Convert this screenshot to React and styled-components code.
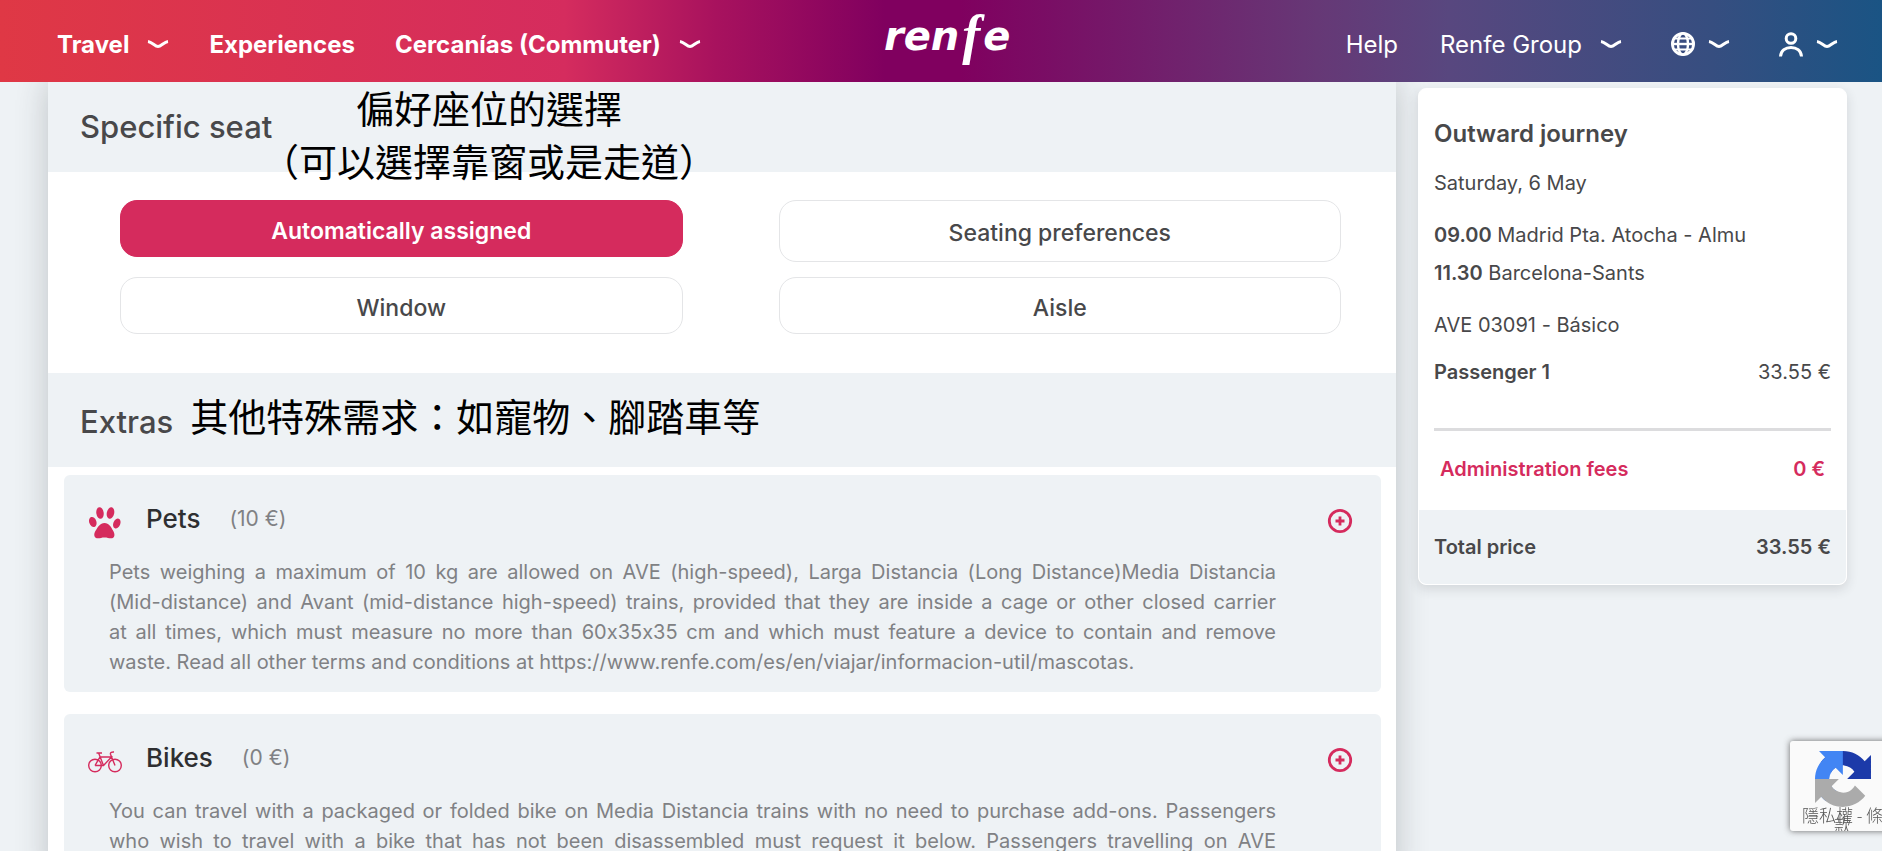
import React, { useState } from "react";
import styled, { createGlobalStyle } from "styled-components";

const Global = createGlobalStyle`
  *, *::before, *::after { box-sizing: border-box; }
  html, body { margin: 0; padding: 0; background: #eef2f5; }
  body {
    font-family: Inter, "Liberation Sans", "Noto Sans CJK TC", sans-serif;
    font-variant-ligatures: no-contextual;
    color: #48484a;
    overflow: hidden;
  }
  h2, h3, p { margin: 0; }
  button { font-family: inherit; color: inherit; cursor: pointer; }
`;

const Page = styled.div`
  height: 100vh;
  overflow: hidden;
`;

const Header = styled.header`
  display: grid;
  grid-template-columns: 1fr auto 1fr;
  align-items: center;
  height: 82px;
  padding: 0 44px 0 57px;
  position: relative;
  z-index: 2;
  background: linear-gradient(
    90deg,
    #df3845 0%,
    #d52c5e 30%,
    #a8125e 38%,
    #80005f 47%,
    #80005f 51%,
    #663876 70%,
    #58477f 77%,
    #364e80 91%,
    #1a5484 100%
  );
`;

const Nav = styled.nav`
  display: flex;
  align-items: center;
  gap: ${(p) => (p.$end ? "42px" : "40px")};
  padding-top: 8px;
  justify-content: ${(p) => (p.$end ? "flex-end" : "flex-start")};
  font-weight: ${(p) => (p.$end ? 400 : 700)};
`;

const NavLink = styled.a`
  color: #fff;
  text-decoration: none;
  font-size: 24px;
  line-height: 30px;
  white-space: nowrap;
`;

const NavButton = styled.button`
  display: flex;
  align-items: center;
  gap: ${(p) => (p.$icon ? "12px" : "18px")};
  margin-left: ${(p) => (p.$icon ? "6px" : 0)};
  padding: 0;
  border: 0;
  background: none;
  color: #fff;
  font-size: 24px;
  font-weight: inherit;
  line-height: 30px;
  white-space: nowrap;
`;

const LogoLink = styled.a`
  display: block;
  height: 58px;
`;

const LogoDrawing = styled.svg`
  display: block;
  overflow: visible;
`;

const Layout = styled.div`
  display: grid;
  grid-template-columns: minmax(0, 1fr) 429px;
  gap: 22px;
  align-items: start;
  padding: 0 35px 0 48px;
`;

const Panel = styled.main`
  background: #fff;
  box-shadow: 0 0 30px rgba(40, 45, 50, 0.24);
`;

const Band = styled.div`
  position: relative;
  display: flex;
  align-items: center;
  gap: 17px;
  height: ${(p) => (p.$tall ? "94px" : "90px")};
  padding: ${(p) => (p.$tall ? "4px" : 0)} 0 0 32px;
  background: #eef2f5;
`;

const BandTitle = styled.h2`
  font-size: 31px;
  line-height: 36px;
  font-weight: 500;
`;

const Note = styled.p`
  font-family: "Noto Sans CJK TC", sans-serif;
  font-size: 38px;
  line-height: 53px;
  color: #000;
  padding-bottom: 16px;
`;

const FloatingNote = styled(Note)`
  position: absolute;
  top: -2px;
  left: 213px;
  padding: 0;
  text-align: center;
  white-space: nowrap;
  z-index: 1;
`;

const SeatGrid = styled.div`
  display: grid;
  grid-template-columns: 1fr 1fr;
  align-items: start;
  gap: 15px 96px;
  padding: 28px 55px 39px 72px;
`;

const SeatButton = styled.button`
  height: ${(p) => p.$height}px;
  padding: 4px 0 0;
  border: 1px solid ${(p) => (p.$on ? "#d52b5d" : "#e4e5e7")};
  border-radius: 17px;
  background: ${(p) => (p.$on ? "#d52b5d" : "#fff")};
  color: ${(p) => (p.$on ? "#fff" : "#48484a")};
  font-size: 23px;
  font-weight: ${(p) => (p.$on ? 600 : 500)};
`;

const ExtraList = styled.div`
  display: flex;
  flex-direction: column;
  gap: 22px;
  padding: 8px 15px 8px 16px;
`;

const ExtraCard = styled.article`
  padding: 24px 28px 15px 24px;
  border-radius: 6px;
  background: #eef2f5;
`;

const ExtraHead = styled.div`
  display: flex;
  align-items: center;
  height: 40px;
  margin-bottom: 18px;
`;

const ExtraIcon = styled.span`
  display: flex;
  width: 34px;
  margin-right: 24px;
  padding-top: 8px;
`;

const ExtraName = styled.h3`
  font-size: 26px;
  line-height: 36px;
  font-weight: 500;
  color: #2e2f31;
`;

const ExtraPrice = styled.span`
  margin-left: 29px;
  font-size: 21px;
  line-height: 30px;
  color: #808184;
`;

const AddButton = styled.button`
  display: flex;
  margin-left: auto;
  padding: 4px 0 0;
  border: 0;
  background: none;
`;

const ExtraText = styled.p`
  margin: 0 77px 0 21px;
  font-size: 20px;
  line-height: 30px;
  color: #808184;
`;

const TextLine = styled.span`
  display: block;
  text-align: justify;
  text-align-last: ${(p) => (p.$fill ? "justify" : "left")};
`;

const Summary = styled.aside`
  margin-top: 6px;
  border: 1px solid #fff;
  border-radius: 8px;
  background: #fff;
  box-shadow: 0 4px 12px rgba(40, 45, 50, 0.14);
  overflow: hidden;
  font-size: 20px;
  line-height: 30px;
`;

const SummaryBody = styled.div`
  padding: 27px 15px 26px;
`;

const SummaryTitle = styled.h2`
  margin-bottom: 16px;
  font-size: 24px;
  line-height: 36px;
  font-weight: 600;
`;

const Line = styled.p`
  margin-bottom: ${(p) => p.$after}px;
`;

const Strong = styled.strong`
  font-weight: 600;
`;

const Row = styled.div`
  display: flex;
  justify-content: space-between;
`;

const Fees = styled(Row)`
  margin-top: 41px;
  padding: 23px 6px 0;
  border-top: 3px solid #dcdcde;
  color: #d52b5d;
  font-weight: 600;
`;

const Total = styled(Row)`
  align-items: center;
  height: 74px;
  padding: 0 15px;
  border-radius: 0 0 7px 7px;
  background: #eef2f5;
  font-weight: 600;
`;

const Captcha = styled.div`
  position: fixed;
  right: -13px;
  bottom: 20px;
  width: 105px;
  height: 90px;
  padding-top: 10px;
  border-radius: 3px;
  background: #fafafa;
  box-shadow: 0 0 6px rgba(90, 90, 90, 0.9);
  text-align: center;
  overflow: hidden;
`;

const CaptchaLogo = styled.svg`
  display: block;
  margin: 0 auto;
`;

const CaptchaTerms = styled.p`
  margin-top: 3px;
  font-family: "Noto Sans CJK TC", sans-serif;
  font-weight: 300;
  font-size: 17px;
  line-height: 10px;
  color: #555;
`;

function Chevron() {
  return (
    <svg width="22" height="10" viewBox="0 0 22 10" fill="none" aria-hidden="true">
      <path d="M1 1.500 C5 2 8 6.500 11 6.500 C14 6.500 17 2 21 1.500" stroke="#fff" strokeWidth="3" />
    </svg>
  );
}

function Globe() {
  return (
    <svg width="26" height="26" viewBox="0 0 26 26" fill="none" stroke="#fff" strokeWidth="2.800" aria-hidden="true">
      <circle cx="13" cy="12" r="10.600" />
      <ellipse cx="13" cy="12" rx="5" ry="10.600" strokeWidth="2.400" />
      <path d="M2 12H24" strokeWidth="2.400" />
      <path d="M4 6.500H22M4 17.500H22" strokeWidth="1.800" />
    </svg>
  );
}

function Person() {
  return (
    <svg width="26" height="26" viewBox="0 0 26 26" fill="none" stroke="#fff" strokeWidth="3" aria-hidden="true">
      <circle cx="13" cy="6.500" r="4.800" />
      <path d="M2.500 24.500C3 18.500 7.500 15.500 13 15.500S23 18.500 23.500 24.500" />
    </svg>
  );
}

function Logo() {
  return (
    <LogoDrawing width="128" height="58" viewBox="0 0 128 58" role="img" aria-label="renfe">
      <text y="38" fill="#fff" fontFamily="'DejaVu Sans', sans-serif" fontWeight="700" fontStyle="italic" fontSize="40">
        ren
        <tspan fontFamily="'Liberation Serif', serif" fontSize="54" dx="3" dy="3">f</tspan>
        <tspan dx="3" dy="-3">e</tspan>
      </text>
    </LogoDrawing>
  );
}

function Paw() {
  return (
    <svg width="34" height="34" viewBox="0 0 34 34" fill="#d52b5d" aria-hidden="true">
      <ellipse cx="12" cy="7" rx="3.700" ry="5.900" transform="rotate(-8 12 7)" />
      <ellipse cx="22.500" cy="7" rx="3.700" ry="5.900" transform="rotate(12 22.500 7)" />
      <ellipse cx="4.800" cy="16" rx="3.600" ry="5.200" transform="rotate(-18 4.800 16)" />
      <ellipse cx="28.800" cy="17.500" rx="3.500" ry="5.200" transform="rotate(22 28.800 17.500)" />
      <path d="M16.500 17c4.500 0 6.500 4 8.500 7.500 2.500 4 1.700 7.800-2 7.800-2.300 0-3.700-.8-6.500-.8s-4.200.8-6.500.8c-3.700 0-5-3.800-2.300-7.800C10 21 12 17 16.500 17z" />
    </svg>
  );
}

function Bike() {
  return (
    <svg width="34" height="22" viewBox="0 0 34 22" fill="none" stroke="#d52b5d" strokeWidth="1.400" aria-hidden="true">
      <circle cx="7" cy="14.500" r="6.300" />
      <circle cx="27" cy="14.500" r="6.300" />
      <path d="M7 14.500L12 6H23.500L15.500 14.500H7M15.500 14.500L10.800 2.500M8.500 2H14M27 14.500L22.500 3.200C22 1.300 24 .8 26 1" />
    </svg>
  );
}

function Plus() {
  return (
    <svg width="26" height="26" viewBox="0 0 26 26" fill="none" stroke="#d52b5d" strokeWidth="2.800" aria-hidden="true">
      <circle cx="13" cy="13" r="10.700" />
      <path d="M13 8.500V17.500M8.500 13H17.500" />
    </svg>
  );
}

function Recycle() {
  return (
    <CaptchaLogo width="56" height="56" viewBox="0 0 64 64" aria-hidden="true">
      <path fill="#1c3aa9" d="M64 31.955l-.033-1.370V4.687l-7.160 7.160C50.948 4.674 42.033.093 32.050.093c-10.400 0-19.622 4.960-25.458 12.640l11.736 11.860a15.550 15.550 0 0 1 4.754-5.334c2.050-1.600 4.952-2.906 8.968-2.906.485 0 .860.057 1.135.163 4.976.393 9.288 3.140 11.828 7.124l-8.307 8.307L64 31.953" />
      <path fill="#4285f4" d="M31.862.094l-1.370.033H4.594l7.160 7.160C4.580 13.147 0 22.060 0 32.046c0 10.400 4.960 19.622 12.640 25.458L24.500 45.768a15.550 15.550 0 0 1-5.334-4.754c-1.600-2.050-2.906-4.952-2.906-8.968 0-.485.057-.860.163-1.135.393-4.976 3.140-9.288 7.124-11.828l8.307 8.307L31.860.095" />
      <path fill="#ababab" d="M.001 32.045l.033 1.370v25.898l7.160-7.160c5.860 7.173 14.774 11.754 24.760 11.754 10.400 0 19.622-4.960 25.458-12.640l-11.736-11.860a15.550 15.550 0 0 1-4.754 5.334c-2.050 1.600-4.952 2.906-8.968 2.906-.485 0-.860-.057-1.135-.163-4.976-.393-9.288-3.140-11.828-7.124l8.307-8.307c-10.522.040-22.400.066-27.295-.005" />
    </CaptchaLogo>
  );
}

const SEATS = [
  { label: "Automatically assigned", height: 57 },
  { label: "Seating preferences", height: 62 },
  { label: "Window", height: 57 },
  { label: "Aisle", height: 57 },
];

const EXTRAS = [
  {
    name: "Pets",
    price: "(10 €)",
    Icon: Paw,
    filled: 3,
    lines: [
      "Pets weighing a maximum of 10 kg are allowed on AVE (high-speed), Larga Distancia (Long Distance)Media Distancia",
      "(Mid-distance) and Avant (mid-distance high-speed) trains, provided that they are inside a cage or other closed carrier",
      "at all times, which must measure no more than 60x35x35 cm and which must feature a device to contain and remove",
      "waste. Read all other terms and conditions at https://www.renfe.com/es/en/viajar/informacion-util/mascotas.",
    ],
  },
  {
    name: "Bikes",
    price: "(0 €)",
    Icon: Bike,
    filled: 2,
    lines: [
      "You can travel with a packaged or folded bike on Media Distancia trains with no need to purchase add-ons. Passengers",
      "who wish to travel with a bike that has not been disassembled must request it below. Passengers travelling on AVE",
    ],
  },
];

export default function App() {
  const [seat, setSeat] = useState(SEATS[0].label);
  return (
    <Page>
      <Global />
      <Header>
        <Nav aria-label="Main">
          <NavButton type="button">Travel <Chevron /></NavButton>
          <NavLink href="#experiences">Experiences</NavLink>
          <NavButton type="button">Cercanías (Commuter) <Chevron /></NavButton>
        </Nav>
        <LogoLink href="#home"><Logo /></LogoLink>
        <Nav $end aria-label="Secondary">
          <NavLink href="#help">Help</NavLink>
          <NavButton type="button">Renfe Group <Chevron /></NavButton>
          <NavButton type="button" $icon aria-label="Language"><Globe /><Chevron /></NavButton>
          <NavButton type="button" $icon aria-label="Account"><Person /><Chevron /></NavButton>
        </Nav>
      </Header>
      <Layout>
        <Panel>
          <section>
            <Band>
              <BandTitle>Specific seat</BandTitle>
              <FloatingNote lang="zh-Hant">
                偏好座位的選擇<br />（可以選擇靠窗或是走道）
              </FloatingNote>
            </Band>
            <SeatGrid>
              {SEATS.map((s) => (
                <SeatButton
                  key={s.label}
                  type="button"
                  $height={s.height}
                  $on={seat === s.label}
                  aria-pressed={seat === s.label}
                  onClick={() => setSeat(s.label)}
                >
                  {s.label}
                </SeatButton>
              ))}
            </SeatGrid>
          </section>
          <section>
            <Band $tall>
              <BandTitle>Extras</BandTitle>
              <Note lang="zh-Hant">其他特殊需求：如寵物、腳踏車等</Note>
            </Band>
            <ExtraList>
              {EXTRAS.map(({ name, price, Icon, lines, filled }) => (
                <ExtraCard key={name}>
                  <ExtraHead>
                    <ExtraIcon><Icon /></ExtraIcon>
                    <ExtraName>{name}</ExtraName>
                    <ExtraPrice>{price}</ExtraPrice>
                    <AddButton type="button" aria-label={`Add ${name}`}><Plus /></AddButton>
                  </ExtraHead>
                  <ExtraText>
                    {lines.map((line, i) => (
                      <TextLine key={line} $fill={i < filled}>{line} </TextLine>
                    ))}
                  </ExtraText>
                </ExtraCard>
              ))}
            </ExtraList>
          </section>
        </Panel>
        <Summary>
          <SummaryBody>
            <SummaryTitle>Outward journey</SummaryTitle>
            <Line $after={22}>Saturday, 6 May</Line>
            <Line $after={8}><Strong>09.00</Strong> Madrid Pta. Atocha - Almu</Line>
            <Line $after={22}><Strong>11.30</Strong> Barcelona-Sants</Line>
            <Line $after={17}>AVE 03091 - Básico</Line>
            <Row><Strong>Passenger 1</Strong><span>33.55 €</span></Row>
            <Fees><span>Administration fees</span><span>0 €</span></Fees>
          </SummaryBody>
          <Total><span>Total price</span><span>33.55 €</span></Total>
        </Summary>
      </Layout>
      <Captcha>
        <Recycle />
        <CaptchaTerms lang="zh-Hant">隱私權 - 條<br />款</CaptchaTerms>
      </Captcha>
    </Page>
  );
}
